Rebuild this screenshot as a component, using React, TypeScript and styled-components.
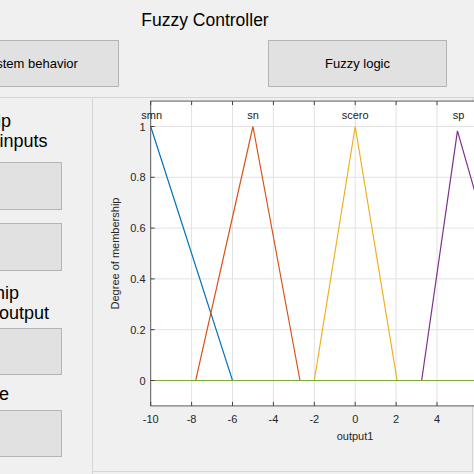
import React from "react";
import styled, { createGlobalStyle } from "styled-components";

const GlobalStyle = createGlobalStyle`
  html, body {
    margin: 0;
    padding: 0;
    width: 474px;
    height: 474px;
    overflow: hidden;
    background: #f0f0f0;
  }
  * { box-sizing: border-box; }
`;

const Window = styled.div`
  width: 474px;
  height: 474px;
  overflow: hidden;
  background: #f0f0f0;
  font-family: "Liberation Sans", Arial, sans-serif;
  color: #000;
  display: flex;
  flex-direction: column;
`;

const Header = styled.header`
  height: 97px;
  display: flex;
  flex-direction: column;
  flex-shrink: 0;
`;

const Title = styled.h1`
  margin: 10px 0 0 0;
  width: 410px;
  text-align: center;
  font-size: 17.5px;
  line-height: 20px;
  font-weight: normal;
`;

const ButtonRow = styled.div`
  display: flex;
  gap: 149px;
  margin-top: 10px;
  margin-left: -60px;
`;

const PushButton = styled.button<{ $w: number; $h: number; $mt?: number }>`
  flex-shrink: 0;
  width: ${(p) => p.$w}px;
  height: ${(p) => p.$h}px;
  margin-top: ${(p) => p.$mt ?? 0}px;
  background: #e1e1e1;
  border: 1px solid #b4b4b4;
  border-radius: 0;
  padding: 0;
  font-family: "Liberation Sans", Arial, sans-serif;
  font-size: 13px;
  color: #000;
`;

const Body = styled.div`
  flex: 1;
  display: flex;
  border-top: 1px solid #d6d6d6;
`;

const LeftPanel = styled.section`
  width: 241px;
  margin-left: -148px;
  flex-shrink: 0;
  border-right: 1px solid #d6d6d6;
  display: flex;
  flex-direction: column;
  align-items: center;
`;

const PanelLabel = styled.div<{ $mt: number; $pr?: number }>`
  margin-top: ${(p) => p.$mt}px;
  padding-right: ${(p) => p.$pr ?? 0}px;
  font-size: 18px;
  line-height: 20px;
  text-align: center;
  white-space: pre-line;
  width: 240px;
`;

const RightPanel = styled.section`
  width: 380px;
  height: 374px;
  flex-shrink: 0;
  border-right: 1px solid #d6d6d6;
  border-bottom: 1px solid #d6d6d6;
`;

const ChartSvg = styled.svg`
  display: block;
  overflow: visible;
  font-family: "Liberation Sans", Arial, sans-serif;
`;

const X0 = 150.7;
const XS = 20.45;
const Y0 = 380.5;
const YS = 254;
const X = (v: number) => X0 + (v + 10) * XS;
const Y = (m: number) => Y0 - m * YS;
const pts = (arr: [number, number][]) => arr.map(([v, m]) => `${X(v).toFixed(2)},${Y(m).toFixed(2)}`).join(" ");

const TOP = Y(1.1);
const BOTTOM = Y(-0.1);
const LEFT = X(-10);
const RIGHT = X(10);

const xTicks = [-10, -8, -6, -4, -2, 0, 2, 4, 6, 8, 10];
const yTicks = [0, 0.2, 0.4, 0.6, 0.8, 1];

const curves: { color: string; data: [number, number][] }[] = [
  { color: "#0072BD", data: [[-10, 1], [-6, 0], [10, 0]] },
  { color: "#D95319", data: [[-10, 0], [-7.8, 0], [-5, 1], [-2.7, 0], [10, 0]] },
  { color: "#EDB120", data: [[-10, 0], [-2, 0], [0, 1], [2.05, 0], [10, 0]] },
  { color: "#7E2F8E", data: [[-10, 0], [3.25, 0], [5.0, 0.983], [8.5, 0], [10, 0]] },
  { color: "#77AC30", data: [[-10, 0], [10, 0]] },
];

const mfLabels: [string, number][] = [
  ["smn", -9.95],
  ["sn", -5],
  ["scero", 0],
  ["sp", 5.05],
];

function MembershipChart() {
  return (
    <ChartSvg width={379} height={373} viewBox="93 98 379 373">
      <rect x={LEFT} y={TOP} width={RIGHT - LEFT} height={BOTTOM - TOP} fill="#ffffff" />
      {xTicks.slice(1, -1).map((t) => (
        <line key={`gx${t}`} x1={X(t)} x2={X(t)} y1={TOP} y2={BOTTOM} stroke="#e2e2e2" strokeWidth={1} />
      ))}
      {yTicks.map((t) => (
        <line key={`gy${t}`} x1={LEFT} x2={RIGHT} y1={Y(t)} y2={Y(t)} stroke="#e2e2e2" strokeWidth={1} />
      ))}
      {curves.map((c, i) => (
        <polyline key={i} points={pts(c.data)} fill="none" stroke={c.color} strokeWidth={1.2} strokeLinejoin="miter" />
      ))}
      <rect x={LEFT} y={TOP} width={RIGHT - LEFT} height={BOTTOM - TOP} fill="none" stroke="#5a5a5a" strokeWidth={1} />
      {xTicks.map((t) => (
        <g key={`tx${t}`}>
          <line x1={X(t)} x2={X(t)} y1={BOTTOM} y2={BOTTOM - 4} stroke="#444" strokeWidth={1} />
          <line x1={X(t)} x2={X(t)} y1={TOP} y2={TOP + 4} stroke="#444" strokeWidth={1} />
          <text x={X(t)} y={423} fontSize={11} fill="#262626" textAnchor="middle">
            {t}
          </text>
        </g>
      ))}
      {yTicks.map((t) => (
        <g key={`ty${t}`}>
          <line x1={LEFT} x2={LEFT + 4} y1={Y(t)} y2={Y(t)} stroke="#444" strokeWidth={1} />
          <text x={145.5} y={Y(t)} fontSize={11} fill="#262626" textAnchor="end" dominantBaseline="central">
            {t}
          </text>
        </g>
      ))}
      {mfLabels.map(([name, v]) => (
        <text key={name} x={X(v)} y={119} fontSize={11} fill="#1a1a1a" textAnchor="middle">
          {name}
        </text>
      ))}
      <text x={355} y={439.5} fontSize={11} fill="#262626" textAnchor="middle">
        output1
      </text>
      <text
        x={0}
        y={0}
        fontSize={11}
        fill="#262626"
        textAnchor="middle"
        transform={`translate(118.5 ${(TOP + BOTTOM) / 2}) rotate(-90)`}
      >
        Degree of membership
      </text>
    </ChartSvg>
  );
}

export default function App() {
  return (
    <>
      <GlobalStyle />
      <Window>
        <Header>
          <Title>Fuzzy Controller</Title>
          <ButtonRow>
            <PushButton $w={179} $h={47}>System behavior</PushButton>
            <PushButton $w={179} $h={47}>Fuzzy logic</PushButton>
          </ButtonRow>
        </Header>
        <Body>
          <LeftPanel>
            <PanelLabel $mt={13} $pr={21}>{"Membership\nFunctions from inputs"}</PanelLabel>
            <PushButton $w={180} $h={48} $mt={11} />
            <PushButton $w={180} $h={48} $mt={13} />
            <PanelLabel $mt={12} $pr={5}>{"Membership\nFunctions for output"}</PanelLabel>
            <PushButton $w={180} $h={47} $mt={5} />
            <PanelLabel $mt={9} $pr={7}>Rule base</PanelLabel>
            <PushButton $w={180} $h={47} $mt={6} />
          </LeftPanel>
          <RightPanel>
            <MembershipChart />
          </RightPanel>
        </Body>
      </Window>
    </>
  );
}
